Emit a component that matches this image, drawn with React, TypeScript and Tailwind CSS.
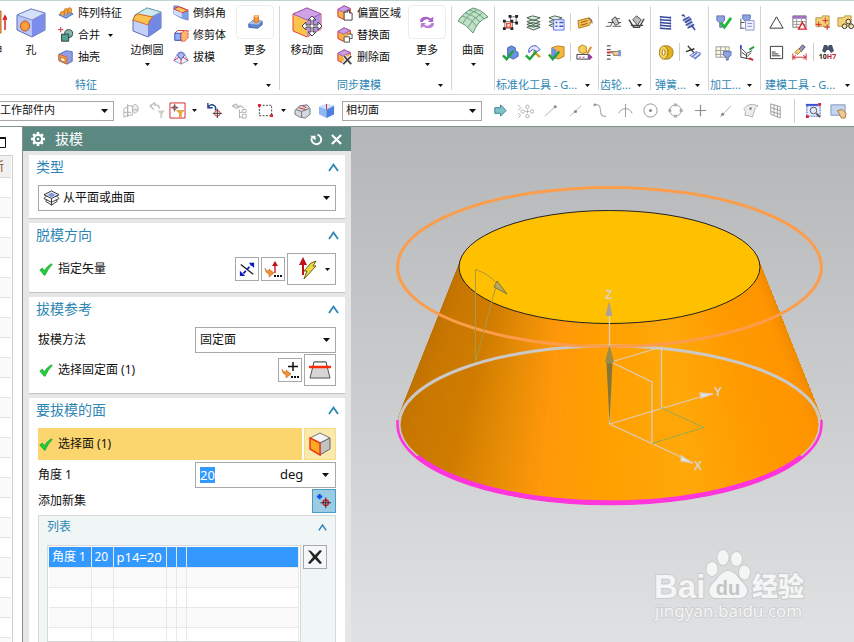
import { useEffect, useRef, type ReactNode } from 'react';
import clsx from 'clsx';

const RED = '#d8232a';
const NAVY = '#27408b';
const GRAY = '#b0b0b0';

const ICONS: Record<string, ReactNode> = {
  pattern: (
    <>
      <path d="M1 11l8-4 8 3-8 5z" fill="#7fa0e0" stroke="#4a68b8" />
      <path d="M3 11V8l2-1 2 1v4M7 9V5l2-1 2 1v6M11 8V4l2-1 2 1v5" fill="#f7a63a" stroke="#c5781c" />
    </>
  ),
  unite: (
    <>
      <path d="M3 0v6M0 3h6" stroke={RED} />
      <circle cx="12" cy="7.500" r="4.500" fill="#7cbcb0" stroke="#333" />
      <path d="M4 8h8v8H4z" fill="#4fa394" stroke="#333" />
    </>
  ),
  shell: (
    <>
      <path d="M1 6l8-4 7 1v11l-6 3-9-4z" fill="#8f9de8" stroke="#5568b8" />
      <path d="M1 6l9 3v8l-9-4z" fill="#f4a04a" stroke="#c56a2a" />
      <path d="M3 9l5 2v4l-5-2z" fill="#fff0dc" stroke="#c56a2a" />
    </>
  ),
  chamfer: (
    <>
      <path d="M1 1h4l12 5v11l-7-2-9-5z" fill="#7ea0ea" stroke="#6f86cc" />
      <path d="M1 4l9 5 7-3-10-4z" fill="#f9c25a" stroke={RED} />
      <path d="M10 9v5l-9-4V5z" fill="#cfdcfb" />
    </>
  ),
  trim: (
    <>
      <path d="M2 7h7v8H2z" fill="#8fb0ff" stroke="#2a3fc0" />
      <path d="M9 7l4-3h4v8l-4 4H9z" fill="#f9b66a" stroke={RED} strokeDasharray="2 1" />
      <path d="M2 7l3-3h8" fill="none" stroke={RED} />
    </>
  ),
  draft: (
    <>
      <path d="M6 4h6l5 9-8 4-8-4z" fill="#eef1fc" stroke="#7f90d0" />
      <path d="M9 10v7M7 9l-6 4M11 9l6 4" fill="none" stroke={RED} />
      <path d="M5 7l4-4 4 4-4 5z" fill="#a8b8f2" stroke="#3d55b0" />
    </>
  ),
  offset: (
    <>
      <path d="M1 5l7-4 7 3v7l-8 5-6-3z" fill="#f7b04a" stroke={RED} />
      <path d="M1 5l7-4 7 3-8 4z" fill="#c9a0e8" stroke="#9458bf" />
      <path d="M8 8h4V6h2v3h3v8H8z" fill="#fff" stroke="#333" />
    </>
  ),
  replace: (
    <>
      <path d="M1 5l7-4 7 3v7l-8 5-6-3z" fill="#f7b04a" stroke={RED} />
      <path d="M1 5l7-4 7 3-8 4z" fill="#c9a0e8" stroke="#9458bf" />
      <path d="M8 11h6v6H8zM11 8h6v5h-3" fill="#fff" stroke="#444" />
    </>
  ),
  remove: (
    <>
      <path d="M1 5l7-4 7 3v7l-8 5-6-3z" fill="#f7b04a" stroke={RED} />
      <path d="M1 5l7-4 7 3-8 4z" fill="#c9a0e8" stroke="#9458bf" />
      <path d="M8 8l8 9M16 8l-9 9" stroke="#fff" strokeWidth="4" />
      <path d="M8 8l8 9M16 8l-9 9" stroke="#444" strokeWidth="2" />
    </>
  ),
  moreFeature: (
    <>
      <path d="M2 11l5-4 10 1v4l-5 4-10-1z" fill="#5d86d0" stroke="#3b5ca8" />
      <path d="M2 11l5-4 10 1-5 4z" fill="#a9c4f0" />
      <path d="M8 2h5v7q-3 2-5 0z" fill="#f59a3c" stroke="#d0701a" />
      <ellipse cx="10.500" cy="2.500" rx="2.500" ry="1.200" fill="#ffc98a" />
    </>
  ),
  moreSync: (
    <>
      <path d="M1 9q0-6 7-6 3 0 5 2l3-2v6h-6l2-2q-5-3-8 2z" fill="#a864c8" />
      <path d="M17 10q0 6-7 6-3 0-5-2l-3 2v-6h6l-2 2q5 3 8-2z" fill="#b980d4" />
    </>
  ),
  frames: (
    <>
      <path d="M9 3h6v6H9zM3 8h8v7H3z" fill="none" stroke="#777" />
      <path d="M7 1h3v3H7zM14 1h3v3h-3zM14 8h3v3h-3zM1 6h3v3H1zM9 6h3v3H9zM1 14h3v3H1zM9 14h3v3H9z" fill="#222" />
      <path d="M5 10h4v4H5z" fill="#fff" stroke="#f05030" strokeWidth="1.500" />
    </>
  ),
  layers: (
    <path
      d="M2 4l6-2 8 2-7 3zM2 8l6-2 8 2-7 3zM2 11l6-2 8 2-7 3zM2 14l6-2 8 2-7 3z"
      fill="#dcebe0"
      stroke="#3f5a48"
    />
  ),
  layersList: (
    <>
      <path d="M1 4l6-2 8 2-7 3zM1 8l6-2 8 2-7 3zM1 12l6-2 8 2-7 3z" fill="#dcebe0" stroke="#4a6350" />
      <path d="M6 6h11v11H6z" fill="#e9edff" stroke="#6070e0" />
      <path d="M8 9h2M8 13h2M12 9h4M12 13h4" stroke="#4050c8" strokeWidth="1.500" />
    </>
  ),
  tag: (
    <>
      <path d="M2 7l12-3 2 4-2 4-11 3z" fill="#f7bb55" stroke="#b87818" />
      <path d="M5 9l7-2M5 12l7-2" stroke="#8b5a10" />
      <path d="M13 5q4-1 4 5" fill="none" stroke="#555" />
    </>
  ),
  partCheck: (
    <>
      <path d="M6 4l4-2 4 2v3l3 2v4l-5 3-6-3z" fill="#6b90e0" stroke="#3f5fb8" />
      <path d="M1 12l4 4 7-9" fill="none" stroke="#1fa33a" strokeWidth="2.500" />
    </>
  ),
  helmetCheck: (
    <>
      <path d="M4 6q2-5 8-4l4 4-3 2-5-2-4 3z" fill="#e4e8ff" stroke="#3f50c8" />
      <path d="M9 8l7 6" stroke="#e0a020" strokeWidth="2.500" />
      <path d="M1 12l4 4 7-8" fill="none" stroke="#1fa33a" strokeWidth="2.500" />
    </>
  ),
  boxCheck: (
    <>
      <path d="M4 4l6-2 7 1v10l-6 3-7-3z" fill="#f6b63c" stroke="#b9801c" />
      <path d="M4 4l5 2v10l-5-3z" fill="#6f8ff0" />
      <path d="M1 11l4 5 7-8" fill="none" stroke="#1fa33a" strokeWidth="2.500" />
    </>
  ),
  cubePen: (
    <>
      <path d="M3 3l4-2 4 2v6l-4 1-4-2z" fill="#f8cf5c" stroke="#b5881c" />
      <path d="M16 3l-4 7" stroke="#e08a20" strokeWidth="2" />
      <path d="M1 11h12v5H1z" fill="#fff" stroke="#333" />
      <path d="M3 14h2M7 14h2M14 11l3 3-3 3z" stroke="#a030a0" fill="#a030a0" />
    </>
  ),
  gear1: (
    <>
      <path d="M1 13h5L9 5h7M3 9h14M8 13h9" fill="none" stroke="#555" />
      <path d="M7 6l4-3 4 7-4 2z" fill="#c9c9c9" stroke="#444" />
    </>
  ),
  gear2: (
    <>
      <path d="M1 6l5 8h6l5-9M3 12h13" fill="none" stroke="#444" strokeWidth="1.500" />
      <path d="M5 6l4-4 5 4-4 6z" fill="#bdbdbd" stroke="#444" />
    </>
  ),
  pointer: (
    <>
      <path d="M2 2h4M2 6h4M2 12h4M2 16h4" stroke="#222" />
      <path d="M2 9h4" stroke={RED} strokeWidth="2" />
      <path d="M6 8h6l4-1v5H9l-1-3H6z" fill="#f3cfa2" stroke="#8a6a48" />
      <path d="M14 7h3v6h-3z" fill="#7f98e0" />
    </>
  ),
  coil: (
    <>
      <path d="M4 2v14M14 2v14" stroke="#8d9ad0" />
      <path d="M3 3l12 1M3 6l12 1M3 9l12 1M3 12l12 1M3 15l12 1" stroke="#35479a" strokeWidth="1.600" />
    </>
  ),
  coil2: (
    <>
      <path d="M3 4l8-1 4 11-6 1z" fill="#b8c2e8" />
      <path d="M2 2q2-2 3 1M3 7l7-4M5 9l7-4M6 12l7-4M8 15l7-4M13 13l3 4" stroke="#3a4f9c" strokeWidth="1.600" />
    </>
  ),
  disc: (
    <>
      <path d="M8 2h4q5 2 5 7t-5 7H8z" fill="#e0b020" stroke="#a17a10" />
      <ellipse cx="7" cy="9" rx="4.500" ry="7" fill="#f5d25a" stroke="#a17a10" />
      <ellipse cx="7" cy="9" rx="1.500" ry="3" fill="#fff" stroke="#a17a10" />
    </>
  ),
  cutSpring: (
    <>
      <path d="M3 2l8 9M1 8l9-3" stroke="#333" strokeWidth="1.500" />
      <path d="M5 12l7-4 5 2-6 5z" fill="#dfe4f8" stroke="#6a7ec8" />
      <path d="M7 14l6-5M10 16l6-5" stroke="#6a7ec8" strokeWidth="1.500" />
    </>
  ),
  toolOk: (
    <>
      <path d="M2 2h8v5L8 9v5H5V9L2 7z" fill="#8ea4e0" stroke="#5f70b0" />
      <path d="M6 9l4 5 7-10" fill="none" stroke="#22b83a" strokeWidth="3" />
    </>
  ),
  toolTree: (
    <>
      <path d="M5 1h8v4l-3 3H8L5 5z" fill="#8ea4e0" stroke="#5f70b0" />
      <path d="M3 5v11M3 9h4M3 15h4" fill="none" stroke="#555" />
      <path d="M8 7h9v10H8z" fill="#f2f4ff" stroke="#8890c8" />
      <path d="M10 10h5M10 13h5" stroke="#7a86d8" />
    </>
  ),
  toolGrid: (
    <>
      <path d="M1 3h14v11H1z" fill="#fffbe0" stroke="#999" />
      <path d="M1 7h14M1 11h14M6 3v11M11 3v11" stroke="#999" />
      <path d="M9 8h8v4l-3 2v3h-2v-3l-3-2z" fill="#8ea4e0" stroke="#5f70b0" />
    </>
  ),
  axes: (
    <>
      <path d="M3 2v12l10 2" fill="none" stroke="#333" />
      <path d="M4 5l5 5 6-3M4 9l6 4 4-4M9 10v5" fill="none" stroke="#444" />
      <path d="M12 6l5-3" stroke="#1fa33a" strokeWidth="2" />
      <path d="M12 15l4 2" stroke={RED} strokeWidth="2" />
      <path d="M3 1v4" stroke="#2030d0" strokeWidth="1.500" />
    </>
  ),
  triangle: <path d="M9 3l7 12H2z" fill="none" stroke="#333" />,
  tableTri: (
    <>
      <path d="M2 2h14v12H2z" fill="#fff" stroke="#777" />
      <path d="M2 2h14v3H2z" fill="#a06ac8" />
      <path d="M2 8h14M2 11h14M6 2v12M11 2v12" stroke="#999" />
      <path d="M12 9l4 7H8z" fill="#fff" stroke={RED} strokeWidth="1.500" />
    </>
  ),
  folderPts: (
    <>
      <path d="M2 4h6l1-2h7v11H2z" fill="#f4d27a" stroke="#b9953c" />
      <path d="M5 8v6M2 11h6M12 4v6M9 7h6M14 11v6M11 14h6" stroke={RED} />
    </>
  ),
  folderCubes: (
    <>
      <path d="M1 4h6l1-2h7v11H1z" fill="#f4d27a" stroke="#b9953c" />
      <circle cx="12" cy="8" r="2.500" fill="#f8e6b0" stroke="#333" />
      <circle cx="8" cy="13" r="2.500" fill="#f8e6b0" stroke="#333" />
      <circle cx="15" cy="13" r="2.500" fill="#f8e6b0" stroke="#333" />
    </>
  ),
  note: (
    <>
      <path d="M2.500 2.500h13v13h-13z" fill="#fff" stroke="#333" />
      <path d="M4 8.500h4M4 10.500h7M4 12.500h9" stroke="#333" />
    </>
  ),
  brushDim: (
    <>
      <path d="M12 1l3 2-4 5-3-2z" fill="#8898c8" stroke="#555" />
      <path d="M8 5l3 2-4 4-3-2z" fill="#f5d47a" stroke="#a08040" />
      <path d="M2 10v7M16 10v7M2 14h14M5 12l-3 2 3 2M13 12l3 2-3 2" fill="none" stroke={RED} />
    </>
  ),
  copyBadge: (
    <g fill="none" stroke={GRAY}>
      <path d="M2 7l4-2v9l-4 2zM6 2v14M2 11h8M6 4h5v3" />
      <path d="M11 5l3-3 3 3v4l-3 3-3-2zM11 9l3-1 3 1" fill="#ededed" />
      <path d="M6 14h5v-3" />
    </g>
  ),
  undoFilter: (
    <>
      <path d="M1 4l5-3v2q5 0 5 4M1 4l4 4" fill="none" stroke="#bbb" strokeWidth="1.500" />
      <path d="M9 9h8l-3 4v4h-2v-4z" fill="#cfcfcf" />
    </>
  ),
  filter: (
    <>
      <path d="M1 1h16v16H1z" fill="#fff" stroke={RED} />
      <circle cx="6" cy="6" r="2" fill="none" stroke={RED} />
      <path d="M6 2v8M2 6h8" stroke="#555" />
      <path d="M8 9h8l-3 3v4h-2v-4z" fill="#f3a832" stroke="#c07a10" strokeWidth=".5" />
    </>
  ),
  undoTarget: (
    <>
      <path d="M2 1v5h5M2 6q3-5 7-2 2 2 1 5" fill="none" stroke={NAVY} strokeWidth="1.500" />
      <circle cx="12" cy="12" r="3" fill="none" stroke={RED} />
      <path d="M12 7v10M7 12h10" stroke="#333" />
    </>
  ),
  treeGray: (
    <>
      <path d="M1 4l4-2 4 3-3 2zM7 5l4-1 3 3" fill="#ddd" stroke={GRAY} />
      <path d="M9 8v9M9 11h3M9 16h3M12 8h4v3h-4zM12 13h4v4h-4z" fill="none" stroke={GRAY} />
    </>
  ),
  marquee: (
    <>
      <path d="M2.500 3.500h13v11h-13z" fill="none" stroke="#333" strokeDasharray="2 1.500" />
      <path d="M1 2h3v3H1zM14 13h3v3h-3z" fill={RED} />
    </>
  ),
  solid: (
    <>
      <path d="M1 9l5-5 8-1 3 4v6l-5 4-6-1-5-3z" fill="#d5d9de" stroke="#6d747c" />
      <path d="M8 16V10l8-3M8 10L2 8" fill="none" stroke="#6d747c" />
      <path d="M5 6l7 2M9 4l4 2" stroke={RED} />
    </>
  ),
  cubeBlue: (
    <>
      <path d="M1 5l8-3 8 2v9l-8 4-8-4z" fill="#8db8f4" />
      <path d="M9 8l8-4v9l-8 4z" fill="#4f80dc" />
      <path d="M1 5l8-3 8 2-8 4z" fill="#cfe2fb" />
      <path d="M9 2v6" stroke={RED} />
    </>
  ),
  arrowRight: <path d="M3 6h6V3l6 6-6 6v-3H3z" fill="#7cc4c8" stroke="#3b7f98" />,
  snap: (
    <g fill="none" stroke={GRAY}>
      <path d="M1 3l3 3-3 3M1 12l3 2-3 3M11 8v4M9 10h4" />
      <circle cx="11" cy="5" r="1.800" />
      <circle cx="11" cy="15" r="1.800" />
      <circle cx="6" cy="10" r="1.800" />
      <circle cx="16" cy="10" r="1.800" />
    </g>
  ),
  endPoint: (
    <>
      <path d="M3 15L14 5" stroke={GRAY} />
      <circle cx="14" cy="5" r="1.600" fill="#888" />
    </>
  ),
  midPoint: (
    <>
      <path d="M3 15L15 4" stroke={GRAY} />
      <circle cx="9" cy="10" r="1.600" fill="#888" />
    </>
  ),
  curve: (
    <>
      <path d="M3 3q6-1 6 6t6 6" fill="none" stroke={GRAY} strokeWidth="1.300" />
      <circle cx="3" cy="3" r="1.500" fill="#999" />
    </>
  ),
  intersect: <path d="M9 2v14M2 12q2-5 7-5t7 5" fill="none" stroke="#999" />,
  arcCenter: (
    <>
      <circle cx="9" cy="9" r="7" fill="none" stroke="#999" />
      <circle cx="9" cy="9" r="1.600" fill="#888" />
    </>
  ),
  quadrant: (
    <>
      <circle cx="9" cy="9" r="6" fill="none" stroke="#999" />
      <path d="M7.500 1.500h3v3h-3zM7.500 13.500h3v3h-3zM1.500 7.500h3v3h-3zM13.500 7.500h3v3h-3z" fill="#aaa" />
    </>
  ),
  existing: <path d="M9 3v12M3 9h12" stroke="#8d8d8d" strokeWidth="1.300" />,
  onCurve: (
    <>
      <path d="M3 16L15 4" stroke={GRAY} />
      <circle cx="6" cy="13" r="1.600" fill="#888" />
    </>
  ),
  onFace: (
    <>
      <path d="M2 7q5-7 15-3-4 2-4 6l-2 6q-4-2-8-2 2-4-1-7z" fill="#ececec" stroke={GRAY} />
      <circle cx="9" cy="7" r="1.500" fill="#888" />
    </>
  ),
  gridFace: <path d="M4 2l10 3v12L4 13zM4 6l10 3M4 10l10 3M7.500 3v11M11 4v12" fill="none" stroke="#999" />,
  zoomBox: (
    <>
      <path d="M2 4v11h14V4z" fill="#e8eefc" stroke="#3a50d0" strokeDasharray="2 1" />
      <path d="M1 3h13" stroke="#3a50d0" strokeWidth="2" />
      <circle cx="9" cy="9" r="3.500" fill="#dce8ff" stroke="#555" />
      <path d="M12 12l4 4" stroke="#555" strokeWidth="2" />
      <path d="M1 14h3v3H1zM14 1h3v3h-3z" fill={RED} />
    </>
  ),
  pan: (
    <>
      <path d="M1 3h15v11H1z" fill="#c4d4ee" stroke="#7f95b8" />
      <path d="M8 9l5-1 4 4-1 5h-4z" fill="#f0c890" stroke="#a07a48" />
    </>
  ),
  planeType: (
    <>
      <path d="M1 5l8-4 8 4-8 4z" fill="#dfe6f8" stroke="#333" />
      <path d="M5 5l4-2 4 2-4 3z" fill="#7e95dc" />
      <path d="M1 9l8 4 8-4M3 12l6 4 6-4M1 9l3-3M17 9l-3-3M3 12l1-2M15 12l-1-2M9 9v7" fill="none" stroke="#333" />
    </>
  ),
  reverse: (
    <>
      <path d="M2 4l14 11" stroke="#222" strokeWidth="1.500" />
      <path d="M5 14l9-10" stroke="#0a18c0" strokeWidth="2" strokeDasharray="4 2" />
      <path d="M11 2h6v6zM1 11v6h6z" fill="#0a18c0" />
    </>
  ),
  vectorDlg: (
    <>
      <path d="M11 13V5" stroke={RED} strokeWidth="1.500" />
      <path d="M11 1l3 5H8z" fill="#c01018" />
      <path d="M1 8q0 3 4 3V9l5 4-5 4v-3q-4-1-4-6z" fill="#f09030" stroke="#b85a10" strokeWidth=".5" />
      <path d="M10 16h2M13 16h2M16 16h2" stroke="#111" strokeWidth="2" />
    </>
  ),
  pointDlg: (
    <>
      <path d="M12 1v9M7 5.500h10" stroke="#111" strokeWidth="1.500" />
      <path d="M1 8q0 3 4 3V9l5 4-5 4v-3q-4-1-4-6z" fill="#f09030" stroke="#b85a10" strokeWidth=".5" />
      <path d="M10 16h2M13 16h2M16 16h2" stroke="#111" strokeWidth="2" />
    </>
  ),
  addSet: (
    <>
      <path d="M4 1v6M1 4h6" stroke="#0a50f0" strokeWidth="2.500" />
      <circle cx="11" cy="11" r="3" fill="none" stroke={RED} strokeWidth="1.800" />
      <path d="M11 5v12M5 11h12" stroke="#222" />
    </>
  ),
  check: <path d="M2 10l3-2 2 3q3-5 8-8l1 1q-5 5-8 12H7z" fill="#1fd038" stroke="#12932a" strokeWidth=".7" />,
};

function Icon({ name, size = 18 }: { name: string; size?: number }) {
  return (
    <svg width={size} height={size} viewBox="0 0 18 18" fill="none" className="shrink-0" aria-hidden="true">
      {ICONS[name]}
    </svg>
  );
}

function Caret({ className }: { className?: string }) {
  return (
    <svg width="7" height="4" viewBox="0 0 7 4" className={clsx('shrink-0', className)} aria-hidden="true">
      <path d="M0 0h7L3.500 4z" fill="#111" />
    </svg>
  );
}

function SmallCaret({ className }: { className?: string }) {
  return (
    <svg width="5" height="3" viewBox="0 0 5 3" className={clsx('shrink-0', className)} aria-hidden="true">
      <path d="M0 0h5L2.500 3z" fill="#111" />
    </svg>
  );
}

function BigCube({ kind }: { kind: 'extrude' | 'hole' | 'blend' | 'move' | 'surface' }) {
  return (
    <svg width="32" height="32" viewBox="0 0 32 32" fill="none" aria-hidden="true">
      {kind === 'extrude' && (
        <>
          <path d="M4 5h22v22H4z" fill="#f4a04a" stroke="#b8691e" />
          <path d="M30 11v13M28 14l2-4 2 4" stroke={RED} strokeWidth="1.500" />
        </>
      )}
      {kind === 'hole' && (
        <>
          <path d="M2 9l14-6 14 4v17l-13 7-15-7z" fill="#b9c4fa" stroke="#5d6cae" />
          <path d="M17 14l13-7v17l-13 7z" fill="#7b8ceb" />
          <path d="M2 9l14-6 14 4-13 7z" fill="#d5e0fb" stroke="#7f8fca" />
          <ellipse cx="10" cy="20" rx="4.500" ry="5" fill="#f7a13a" stroke="#c8501e" />
        </>
      )}
      {kind === 'blend' && (
        <>
          <path d="M2 14l2-5 12-7 14 4v16l-13 9-15-6z" fill="#c5d0fa" stroke="#5d6cae" />
          <path d="M17 18q1-6 5-8l8-4v16l-13 9z" fill="#7188e4" />
          <path d="M4 9l12-7 14 4-10 5z" fill="#c9ebee" stroke="#7fa5b5" />
          <path d="M2 14q1-5 5-6l15 3q-4 2-5 8z" fill="#fbc352" stroke="#e0651e" />
        </>
      )}
      {kind === 'move' && (
        <>
          <path d="M2 8l14-6 14 6v15l-14 8-14-6z" fill="#fcc34c" stroke="#e8432e" />
          <path d="M16 14l14-6v15l-14 8z" fill="#b98fe0" />
          <path d="M2 8l14-6 14 6-14 6z" fill="#d0a3e6" stroke="#9b62bf" />
          <path
            d="M21 10l4 4h-3v5h5v-3l4 4-4 4v-3h-5v5h3l-4 4-4-4h3v-5h-5v3l-4-4 4-4v3h5v-5h-3z"
            fill="#fff"
            stroke="#444"
          />
        </>
      )}
      {kind === 'surface' && (
        <>
          <path d="M1 15Q7 6 16 2q9 2 15 9-10 3-15 16Q9 18 1 15z" fill="#bfe0c6" stroke="#5e9770" />
          <path
            d="M5 10q9 2 15 11M8 7q9 2 15 9M12 4q9 2 15 9M6 17Q11 8 20 4M11 21q5-9 14-14"
            stroke="#6da27d"
          />
        </>
      )}
    </svg>
  );
}

function BigButton({
  label,
  className,
  caret,
  framed,
  children,
}: {
  label: string;
  className: string;
  caret?: boolean;
  framed?: boolean;
  children: ReactNode;
}) {
  return (
    <button type="button" className={clsx('flex shrink-0 flex-col items-center pt-[3px]', className)}>
      <span
        className={clsx(
          'flex h-[34px] items-center justify-center',
          framed && 'w-[38px] rounded-sm border border-[#ececec]',
        )}
      >
        {children}
      </span>
      <span className="mt-[3px] whitespace-nowrap leading-4">{label}</span>
      {caret && <SmallCaret className="mt-[5px]" />}
    </button>
  );
}

function SmallColumn({ items, className }: { items: [string, string, boolean?][]; className: string }) {
  return (
    <div className={clsx('flex shrink-0 flex-col pl-[3px]', className)}>
      {items.map(([icon, label, caret]) => (
        <button key={label} type="button" className="flex h-[22px] items-center gap-1 whitespace-nowrap">
          <Icon name={icon} size={16} />
          <span className="leading-4">{label}</span>
          {caret && <SmallCaret className="ml-1" />}
        </button>
      ))}
    </div>
  );
}

function Group({
  label,
  className,
  labelClass = 'pl-px',
  children,
}: {
  label?: string;
  className: string;
  labelClass?: string;
  children: ReactNode;
}) {
  return (
    <>
      <section className={clsx('flex flex-col overflow-hidden', className)}>
        <div className="flex h-[74px]">{children}</div>
        {label && (
          <div className="flex h-[18px] items-center justify-between pr-2">
            <span className={clsx('whitespace-nowrap leading-4 text-[#2e86b5]', labelClass)}>{label}</span>
            <SmallCaret />
          </div>
        )}
      </section>
      <div className="my-1 w-px shrink-0 bg-[#d4d4d4]" />
    </>
  );
}

// '|' in a row draws a thin separator
function ToolRows({ rows, className }: { rows: string[][]; className: string }) {
  return (
    <div className={clsx('flex flex-col pt-[5px]', className)}>
      {rows.map((row, i) => (
        <div key={i} className="flex h-[30px] items-center">
          {row.map((name) =>
            name === '|' ? (
              <span key="sep" className="mx-0.5 h-[18px] w-px bg-[#d0d0d0]" />
            ) : name === 'fit' ? (
              <button key={name} type="button" aria-label="10H7" className="flex w-[23px] flex-col items-center">
                <svg width="14" height="9" viewBox="0 0 14 9" aria-hidden="true">
                  <path d="M1 7l2-6h3l1 2 1-2h3l2 6-3 2-2-3H6L4 9z" fill="#46536a" />
                </svg>
                <span className="text-[7px] font-bold leading-[8px] text-[#222]">
                  10<span className="text-[#c82028]">H7</span>
                </span>
              </button>
            ) : (
              <button key={name} type="button" aria-label={name} className="flex w-[23px] shrink-0 justify-center">
                <Icon name={name} size={17} />
              </button>
            ),
          )}
        </div>
      ))}
    </div>
  );
}

function Ribbon() {
  return (
    <header className="flex h-[95px] shrink-0 overflow-hidden border-b border-t border-b-[#d9d9d9] border-t-[#c3d3d3] pt-px text-[11px]">
      <Group label="特征" className="w-[279px] shrink-0" labelClass="w-[172px] text-center">
        <div className="flex w-[7px] shrink-0 justify-end overflow-hidden">
          <BigButton label="拉伸" className="w-8">
            <BigCube kind="extrude" />
          </BigButton>
        </div>
        <BigButton label="孔" className="w-12">
          <BigCube kind="hole" />
        </BigButton>
        <SmallColumn
          className="w-[69px]"
          items={[
            ['pattern', '阵列特征'],
            ['unite', '合并', true],
            ['shell', '抽壳'],
          ]}
        />
        <BigButton label="边倒圆" className="w-[46px]" caret>
          <BigCube kind="blend" />
        </BigButton>
        <SmallColumn
          className="w-[61px]"
          items={[
            ['chamfer', '倒斜角'],
            ['trim', '修剪体'],
            ['draft', '拔模'],
          ]}
        />
        <BigButton label="更多" className="w-12" caret framed>
          <Icon name="moreFeature" size={16} />
        </BigButton>
      </Group>
      <Group label="同步建模" className="w-[171px] shrink-0" labelClass="flex-1 text-center">
        <BigButton label="移动面" className="w-[54px]">
          <BigCube kind="move" />
        </BigButton>
        <SmallColumn
          className="w-[69px]"
          items={[
            ['offset', '偏置区域'],
            ['replace', '替换面'],
            ['remove', '删除面'],
          ]}
        />
        <BigButton label="更多" className="w-12" caret framed>
          <Icon name="moreSync" size={16} />
        </BigButton>
      </Group>
      <Group className="w-[42px] shrink-0">
        <BigButton label="曲面" className="w-full" caret>
          <BigCube kind="surface" />
        </BigButton>
      </Group>
      <Group label="标准化工具 - G..." className="w-[103px] shrink-0">
        <ToolRows
          className="pl-1"
          rows={[
            ['frames', 'layers', 'layersList', '|', 'tag'],
            ['partCheck', 'helmetCheck', 'boxCheck', '|', 'cubePen'],
          ]}
        />
      </Group>
      <Group label="齿轮..." className="w-[51px] shrink-0">
        <ToolRows className="pl-[3px]" rows={[['gear1', 'gear2'], ['pointer']]} />
      </Group>
      <Group label="弹簧..." className="w-[57px] shrink-0" labelClass="pl-1">
        <ToolRows className="pl-[3px]" rows={[['coil', 'coil2'], ['disc', '|', 'cutSpring']]} />
      </Group>
      <Group label="加工..." className="w-[51px] shrink-0">
        <ToolRows className="pl-[3px]" rows={[['toolOk', 'toolTree'], ['toolGrid', 'axes']]} />
      </Group>
      <section className="flex min-w-0 flex-1 flex-col overflow-hidden">
        <div className="flex h-[74px]">
          <ToolRows
            className="pl-1"
            rows={[
              ['triangle', 'tableTri', 'folderPts', 'folderCubes'],
              ['note', 'brushDim', '|', 'fit'],
            ]}
          />
        </div>
        <div className="flex h-[18px] items-center justify-between pl-1 pr-1">
          <span className="whitespace-nowrap leading-4 text-[#2e86b5]">建模工具 - G...</span>
          <SmallCaret />
        </div>
      </section>
    </header>
  );
}

function Select({
  id,
  label,
  value,
  className,
  selectClass = 'pl-1',
  icon,
}: {
  id: string;
  label?: string;
  value: string;
  className: string;
  selectClass?: string;
  icon?: string;
}) {
  return (
    <div className={clsx('relative flex items-center border bg-white', className)}>
      {icon && (
        <span className="pl-1">
          <Icon name={icon} size={17} />
        </span>
      )}
      <select
        id={id}
        aria-label={label}
        defaultValue={value}
        className={clsx('h-full min-w-0 flex-1 appearance-none bg-transparent outline-none', selectClass)}
      >
        <option>{value}</option>
      </select>
      <Caret className="pointer-events-none absolute right-[5px]" />
    </div>
  );
}

function BarIcon({ name, className }: { name: string; className: string }) {
  return (
    <button type="button" aria-label={name} className={clsx('flex shrink-0 justify-center', className)}>
      <Icon name={name} size={17} />
    </button>
  );
}

const SNAP_ICONS = [
  'arrowRight',
  'snap',
  'endPoint',
  'midPoint',
  'curve',
  'intersect',
  'arcCenter',
  'quadrant',
  'existing',
  'onCurve',
  'onFace',
  'gridFace',
];

function SelectionBar() {
  return (
    <div className="flex h-8 shrink-0 items-center overflow-hidden border-b border-[#84908f] text-[11px]">
      <Select
        id="scope"
        label="选择范围"
        value="工作部件内"
        className="h-5 w-[114px] shrink-0 border-l-0 border-[#a8a8a8]"
        selectClass="pl-0"
      />
      <BarIcon name="copyBadge" className="w-8" />
      <BarIcon name="undoFilter" className="w-[22px]" />
      <BarIcon name="filter" className="w-[18px]" />
      <SmallCaret className="mx-1.5" />
      <BarIcon name="undoTarget" className="w-[22px]" />
      <BarIcon name="treeGray" className="w-7" />
      <BarIcon name="marquee" className="w-6" />
      <SmallCaret className="mx-1" />
      <BarIcon name="solid" className="w-6" />
      <BarIcon name="cubeBlue" className="w-6" />
      <Select
        id="rule"
        label="面规则"
        value="相切面"
        className="ml-1 h-5 w-[140px] shrink-0 border-[#a8a8a8]"
        selectClass="pl-[3px]"
      />
      <div className="ml-1.5 flex">
        {SNAP_ICONS.map((name) => (
          <BarIcon key={name} name={name} className="w-[25px]" />
        ))}
      </div>
      <span className="mx-1.5 h-6 w-px shrink-0 bg-[#cfcfcf]" />
      <BarIcon name="zoomBox" className="w-[25px]" />
      <BarIcon name="pan" className="w-[25px]" />
    </div>
  );
}

function NavigatorEdge() {
  return (
    <aside className="flex w-[22px] shrink-0 flex-col overflow-hidden bg-white text-[12px]">
      <div className="h-7 shrink-0 pt-[10px]">
        <svg width="6" height="11" viewBox="0 0 6 11" aria-hidden="true">
          <path d="M0 1h5.500v9.500H0" fill="none" stroke="#111" />
          <path d="M0 1h6" stroke="#111" strokeWidth="2" />
        </svg>
      </div>
      <div className="w-[13px] flex-1 overflow-hidden border-r border-t border-[#d0d0d0]">
        <div className="mr-px flex h-[22px] items-center justify-start overflow-hidden border-b border-[#d8d8d8] bg-[#f0f0f0]">
          <div className="flex w-1 shrink-0 justify-end text-[#7a4a20]">新</div>
        </div>
        {Array.from({ length: 24 }, (_, i) => (
          <div key={i} className="mr-px h-5 border-b border-[#e4e4e4] odd:bg-[#fafafa]" />
        ))}
      </div>
    </aside>
  );
}

function Section({ title, className, children }: { title: string; className?: string; children: ReactNode }) {
  return (
    <section className={clsx('bg-white', className)}>
      <h2 className="flex h-[26px] shrink-0 items-center justify-between pb-0.5 pl-[7px] pr-1.5 text-[14px] leading-6 text-[#2e86b5]">
        {title}
        <Chevron />
      </h2>
      {children}
    </section>
  );
}

function Chevron({ size = 11 }: { size?: number }) {
  return (
    <svg width={size} height={size} viewBox="0 0 11 11" aria-hidden="true">
      <path d="M1 9l4.500-6.500L10 9" fill="none" stroke="#2e86b5" strokeWidth="1.800" />
    </svg>
  );
}

function ToolButton({ label, className, children }: { label: string; className: string; children: ReactNode }) {
  return (
    <button
      type="button"
      aria-label={label}
      className={clsx('flex shrink-0 items-center justify-center border', className)}
    >
      {children}
    </button>
  );
}

const LIST_ROWS = [['角度 1', '20', 'p14=20'], [], [], [], []];

function DraftDialog() {
  const angleRef = useRef<HTMLInputElement>(null);

  useEffect(() => {
    angleRef.current?.focus();
    angleRef.current?.select();
  }, []);

  return (
    <form
      className="flex w-[329px] shrink-0 flex-col border-l border-[#84908f] bg-[#e6e6e6] text-[12px] text-[#111]"
      onSubmit={(e) => e.preventDefault()}
    >
      <div className="flex h-6 shrink-0 items-center bg-[#5c8882] pl-2 pr-[9px] text-white">
        <svg width="14" height="14" viewBox="0 0 16 16" fill="none" aria-hidden="true">
          <path d="M8 0v16M0 8h16M2.500 2.500l11 11M13.500 2.500l-11 11" stroke="#fff" strokeWidth="3" />
          <circle cx="8" cy="8" r="4.800" fill="#5c8882" stroke="#fff" strokeWidth="2.500" />
          <circle cx="8" cy="8" r="1.500" fill="#fff" />
        </svg>
        <h1 className="ml-2.5 text-[14px] leading-6">拔模</h1>
        <button type="button" aria-label="重置" className="ml-auto">
          <svg width="13" height="13" viewBox="0 0 14 14" fill="none" aria-hidden="true">
            <path d="M8 1.800A5.200 5.200 0 1 1 2 5" stroke="#fff" strokeWidth="2" />
            <path d="M0 3h6v5z" fill="#fff" />
          </svg>
        </button>
        <button type="button" aria-label="关闭" className="ml-2">
          <svg width="11" height="11" viewBox="0 0 12 12" aria-hidden="true">
            <path d="M1 1l10 10M11 1L1 11" stroke="#fff" strokeWidth="2.400" />
          </svg>
        </button>
      </div>

      <div className="flex min-h-0 flex-1 flex-col gap-1 px-1.5 pt-1">
        <Section title="类型" className="shrink-0 border-b border-[#c4c4c4] pb-[7px]">
          <Select
            id="draft-type"
            label="类型"
            value="从平面或曲面"
            icon="planeType"
            className="mx-[9px] mt-1 h-[26px] border-[#a8a8a8]"
            selectClass="pl-[3px]"
          />
        </Section>

        <Section title="脱模方向" className="shrink-0 border-b border-[#c4c4c4] pb-[7px]">
          <div className="mx-[9px] mt-1 flex h-8 items-center">
            <Icon name="check" size={16} />
            <span className="ml-1 flex-1">指定矢量</span>
            <ToolButton label="反向" className="h-6 w-6 border-[#a8a8a8]">
              <Icon name="reverse" size={16} />
            </ToolButton>
            <ToolButton label="矢量对话框" className="ml-0.5 h-6 w-6 border-[#a8a8a8]">
              <Icon name="vectorDlg" />
            </ToolButton>
            <ToolButton label="自动判断的矢量" className="ml-0.5 h-8 w-[49px] gap-2 border-[#a8a8a8] pl-1">
              <svg width="20" height="24" viewBox="0 0 20 24" aria-hidden="true">
                <path d="M6 5v13" stroke="#c01018" strokeWidth="2" />
                <path d="M6 0l4 8H2z" fill="#c01018" />
                <path d="M14 6l5-2-3 5h3L7 22l3-8H7z" fill="#f0d840" stroke="#6a6018" />
              </svg>
              <SmallCaret />
            </ToolButton>
          </div>
        </Section>

        <Section title="拔模参考" className="shrink-0 border-b border-[#c4c4c4] pb-[7px]">
          <div className="mx-[9px] mt-1 flex h-[26px] items-center">
            <label htmlFor="method" className="flex-1">
              拔模方法
            </label>
            <Select id="method" value="固定面" className="h-[26px] w-[141px] border-[#a8a8a8]" />
          </div>
          <div className="mx-[9px] mt-px flex h-8 items-center">
            <Icon name="check" size={16} />
            <span className="ml-1 flex-1">选择固定面 (1)</span>
            <ToolButton label="点对话框" className="h-6 w-6 border-[#a8a8a8]">
              <Icon name="pointDlg" />
            </ToolButton>
            <ToolButton label="固定面" className="ml-0.5 h-8 w-8 border-[#a8a8a8]">
              <svg width="24" height="20" viewBox="0 0 24 20" aria-hidden="true">
                <path d="M6 2h12l4 16H2z" fill="#d6d6d6" stroke="#555" />
                <path d="M6 2h12l1 5H5z" fill="#fff" stroke="#555" />
                <path d="M1 7h22" stroke="#ff2a00" strokeWidth="2.500" />
              </svg>
            </ToolButton>
          </div>
        </Section>

        <Section title="要拔模的面" className="flex min-h-0 flex-1 flex-col">
          <div className="mx-[9px] mt-1 flex h-8 shrink-0 gap-0.5">
            <div className="flex flex-1 items-center bg-[#fbd56e]">
              <Icon name="check" size={16} />
              <span className="ml-1">选择面 (1)</span>
            </div>
            <ToolButton label="选择面" className="h-8 w-8 border-[#f7dc8a] bg-[#f9e9ac]">
              <svg width="22" height="24" viewBox="0 0 22 24" aria-hidden="true">
                <path d="M1 6l10-5 10 5-10 5z" fill="#f4f4f4" stroke="#777" />
                <path d="M11 11l10-5v11l-10 6z" fill="#c2c2c2" stroke="#666" />
                <path d="M1 6l10 5v12L1 17z" fill="#fcab28" stroke="#f23a10" strokeWidth="1.500" />
              </svg>
            </ToolButton>
          </div>

          <div className="mx-[9px] mt-0.5 flex h-[26px] shrink-0 items-center">
            <label htmlFor="angle" className="flex-1">
              角度 1
            </label>
            <div className="flex h-[26px] w-[141px] items-center border border-[#a8a8a8]">
              <input
                id="angle"
                ref={angleRef}
                defaultValue="20"
                className="ml-1 w-[60px] text-[13px] leading-4 outline-none selection:bg-[#3399ff] selection:text-white"
              />
              <Select
                id="unit"
                label="单位"
                value="deg"
                className="h-6 flex-1 border-transparent text-[13px]"
                selectClass="pl-[19px]"
              />
            </div>
          </div>

          <div className="mx-[9px] mt-px flex h-6 shrink-0 items-center justify-between">
            <span>添加新集</span>
            <ToolButton label="添加新集" className="h-6 w-6 border-[#4a9cc8] bg-[#9ccbe4]">
              <Icon name="addSet" size={16} />
            </ToolButton>
          </div>

          <div className="mx-[9px] mt-0.5 flex min-h-0 flex-1 flex-col border-x border-t border-[#d8d8d8] bg-[#f0f6f6] px-2">
            <h3 className="flex h-6 shrink-0 items-center justify-between pb-0.5 text-[#2e86b5]">
              列表
              <Chevron size={9} />
            </h3>
            <div className="mt-[5px] flex min-h-0 flex-1 items-start gap-0.5">
              <div className="h-full flex-1 overflow-hidden border border-[#d8d8d8] bg-white p-px">
                <table className="w-full table-fixed border-collapse text-[12px]">
                  <colgroup>
                    <col className="w-[42px]" />
                    <col className="w-[22px]" />
                    <col className="w-[53px]" />
                    <col className="w-[10px]" />
                    <col className="w-[10px]" />
                    <col />
                  </colgroup>
                  <tbody>
                    {LIST_ROWS.map((cells, i) => (
                      <tr
                        key={i}
                        className={clsx(
                          'h-5 border-b border-[#e8e8e8]',
                          i === 0 ? 'bg-[#3399ff] text-white' : i % 2 ? 'bg-[#fafafa]' : 'bg-white',
                        )}
                      >
                        {[0, 1, 2, 3, 4, 5].map((c) => (
                          <td
                            key={c}
                            className={clsx(
                              'whitespace-nowrap border-r border-[#e8e8e8] p-0 pl-[3px] leading-4',
                              c === 2 && 'text-[13px]',
                            )}
                          >
                            {cells[c]}
                          </td>
                        ))}
                      </tr>
                    ))}
                  </tbody>
                </table>
              </div>
              <ToolButton label="移除" className="h-6 w-6 border-[#a8a8a8] bg-[#f4f7f7]">
                <svg width="16" height="16" viewBox="0 0 16 16" aria-hidden="true">
                  <path d="M1 1l3 1 4 4 5-5 2 1-5 6 5 6-2 1-5-5-5 5-2-1 5-6z" fill="#222" />
                </svg>
              </ToolButton>
            </div>
          </div>
        </Section>
      </div>
    </form>
  );
}

// shading of the conical face, by angle from the left edge
const SHADES: [number, number, number, number][] = [
  [-10, 190, 114, 0],
  [15, 200, 119, 0],
  [40, 207, 124, 0],
  [56, 230, 140, 6],
  [70, 255, 152, 10],
  [88, 255, 160, 0],
  [112, 255, 168, 10],
  [126, 255, 160, 4],
  [140, 255, 153, 0],
  [165, 255, 149, 0],
  [190, 236, 136, 0],
];

function shadeAt(angle: number) {
  let i = 0;
  while (i < SHADES.length - 2 && SHADES[i + 1][0] < angle) i++;
  const a = SHADES[i];
  const b = SHADES[i + 1];
  const k = (angle - a[0]) / (b[0] - a[0]);
  const mix = (n: number) => Math.round(a[n] + (b[n] - a[n]) * k);
  return `rgb(${mix(1)},${mix(2)},${mix(3)})`;
}

function pointAt(cy: number, rx: number, ry: number, deg: number) {
  const t = (deg * Math.PI) / 180;
  return `${(609.5 - rx * Math.cos(t)).toFixed(2)},${(cy + ry * Math.sin(t)).toFixed(2)}`;
}

// each facet runs on to the right edge, so the next one covers its seam
function coneFacets() {
  const out: ReactNode[] = [];
  for (let d = -9; d < 189; d += 1) {
    const angles: number[] = [];
    for (let a = d; a <= 189; a += 3) angles.push(a);
    angles.push(189);
    const top = angles.map((a) => pointAt(267, 150, 57, a));
    const bottom = angles.map((a) => pointAt(424.5, 212, 80, a)).reverse();
    out.push(<polygon key={d} points={[...top, ...bottom].join(' ')} fill={shadeAt(d)} />);
  }
  return out;
}

function Viewport() {
  return (
    <main className="min-w-0 flex-1 bg-linear-to-b from-[#b5b6b8] to-[#e0e1e3]">
      <svg className="h-full w-full" viewBox="351 127 503 515" fill="none" preserveAspectRatio="xMidYMid slice">
        {coneFacets()}
        <ellipse cx="609.500" cy="267" rx="150.500" ry="56.500" fill="#ffc000" stroke="#222" />

        <ellipse cx="609.500" cy="424.500" rx="210.500" ry="78.500" stroke="#cbc8c8" strokeWidth="3" />
        <path d="M397.500 420v4.500a212 79.500 0 0 0 424 0V420" stroke="#ff35dc" strokeWidth="2.500" />
        <path d="M418 456a211 79 0 0 0 383 0" stroke="#ff35dc" strokeWidth="3" />
        <ellipse cx="609.500" cy="267" rx="212" ry="79.500" stroke="#fb9d4b" strokeWidth="3" />

        {/* draft angle handle */}
        <g stroke="#a89a48">
          <path d="M475.500 362v-92.500q12 4 20 12.500M475.500 362l20-74" />
          <path d="M494 287l3-6 10 13z" fill="#b8a860" stroke="#80743a" />
        </g>

        {/* datum csys */}
        <g stroke="#dcccbc" strokeWidth="1.300">
          <path d="M609.500 424V316M609.500 424l94-28M609.500 424l76 35M611 362l50.500-15v61M611 362l41 20v61" />
          <path d="M609 301l3.500 15h-7z" fill="#a9a19c" stroke="none" />
          <path d="M713 394l-13-1 1 5z" fill="#e4e4e4" />
          <path d="M693 463l-12-7v5z" fill="#e4e4e4" />
        </g>
        <path d="M661.500 408l42.500 19.500-52 16" stroke="#62ad72" strokeDasharray="2 1" />
        <path d="M609.500 424l-3-62h6z" fill="#84763a" />
        <path d="M609.500 345l4.500 17q-4.500 3-9 0z" fill="#9c8c48" />
        <g fill="#dad0c8" className="font-['Liberation_Sans',sans-serif] text-[12px] font-bold" textAnchor="middle">
          <text x="609" y="299">
            Z
          </text>
          <text x="718" y="396">
            Y
          </text>
          <text x="698" y="470">
            X
          </text>
        </g>

        {/* watermark */}
        <g fill="#f4f5f5" stroke="#c9cbcd" strokeWidth="2" paintOrder="stroke">
          <text x="654" y="598" className="font-['Liberation_Sans',sans-serif] text-[33px] font-bold">
            Bai
          </text>
          <ellipse cx="712" cy="569" rx="5.500" ry="7" />
          <ellipse cx="723" cy="557.500" rx="5.500" ry="7.500" />
          <ellipse cx="736.500" cy="559" rx="5.500" ry="7" />
          <ellipse cx="744.500" cy="572.500" rx="5.500" ry="7" />
          <path d="M728 571c7 0 10 7 14 11 9 8 5 16-3 16h-22c-8 0-11-8-3-16 5-4 7-11 14-11z" />
          <text x="752" y="596" className="text-[26px] font-black">
            经验
          </text>
          <text x="655" y="617" strokeWidth="1.500" className="text-[17px]">
            jingyan.baidu.com
          </text>
        </g>
        <text
          x="728"
          y="595"
          textAnchor="middle"
          fill="#c2c4c6"
          className="font-['Liberation_Sans',sans-serif] text-[20px] font-bold"
        >
          du
        </text>
      </svg>
    </main>
  );
}

export default function App() {
  return (
    <div className="flex h-screen flex-col overflow-hidden bg-white font-['Noto_Sans','Noto_Sans_CJK_SC',sans-serif] text-[#111]">
      <Ribbon />
      <SelectionBar />
      <div className="flex min-h-0 flex-1">
        <NavigatorEdge />
        <DraftDialog />
        <Viewport />
      </div>
    </div>
  );
}
